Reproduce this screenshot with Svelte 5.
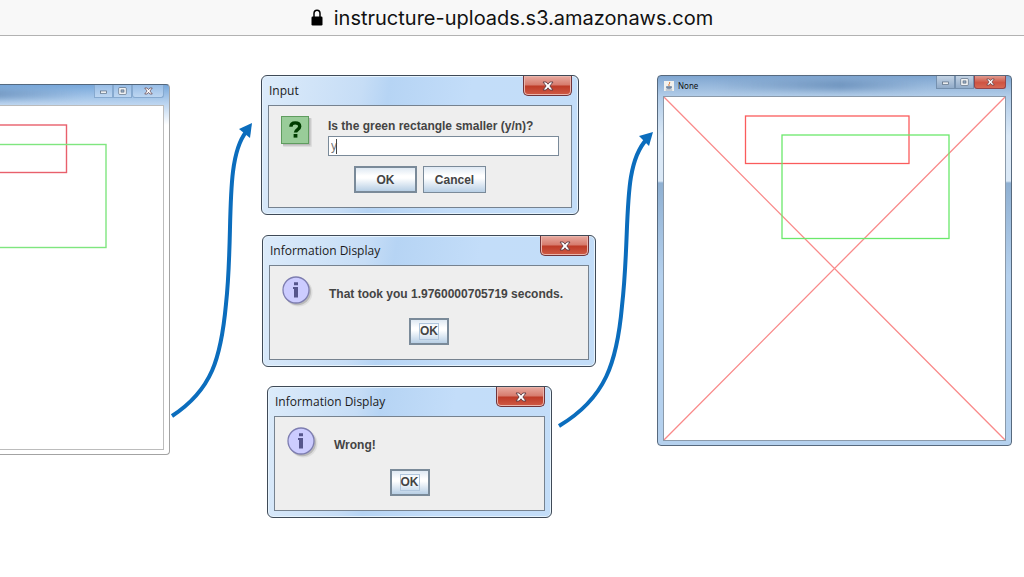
<script>
	const host = 'instructure-uploads.s3.amazonaws.com';

	let answer = $state('y');

	const infoDialogs = [
		{ id: 'timing', message: 'That took you 1.9760000705719 seconds.' },
		{ id: 'result', message: 'Wrong!' }
	];
</script>

{#snippet cross()}
	<svg class="cross" viewBox="0 0 12 10" aria-hidden="true">
		<path
			d="M1 1h3.2L6 3.2 7.8 1H11L7.9 5 11 9H7.8L6 6.8 4.2 9H1l3.1-4z"
			fill="#fff"
			stroke="#5b3a42"
			stroke-width="0.9"
			stroke-linejoin="round"
		/>
	</svg>
{/snippet}

{#snippet titleBar(title)}
	<header class="title-bar">
		<h2>{title}</h2>
		<button class="close" aria-label="Close">{@render cross()}</button>
	</header>
{/snippet}

{#snippet frameControls()}
	<div class="controls">
		<button aria-label="Minimize">
			<svg viewBox="0 0 12 10"><rect x="2" y="5" width="8" height="3" fill="#fff" stroke="#59697d" /></svg>
		</button>
		<button aria-label="Maximize">
			<svg viewBox="0 0 12 10">
				<rect x="1" y="0.5" width="10" height="9" rx="1" fill="#fff" stroke="#59697d" />
				<rect x="4" y="3.5" width="4" height="3" fill="#9db3cc" stroke="#59697d" />
			</svg>
		</button>
		<button class="frame-close" aria-label="Close">{@render cross()}</button>
	</div>
{/snippet}

<div class="page">
	<div class="address-bar">
		<svg class="lock" viewBox="0 0 12 17" aria-hidden="true">
			<path d="M3 8V4.6C3 2.6 4.2 1.2 6 1.2s3 1.4 3 3.4V8" fill="none" stroke="#000" stroke-width="1.5" />
			<rect x="0.5" y="7.5" width="11" height="9" rx="1.2" />
		</svg>
		<span>{host}</span>
	</div>

	<main class="desktop">
		<section class="frame frame-left">
			<header class="frame-bar">
				<span class="smudge"></span>
				{@render frameControls()}
			</header>
			<svg class="drawing" viewBox="0 0 343 345">
				<rect x="81.5" y="20" width="164" height="47.5" fill="none" stroke="#e8606c" stroke-width="1.4" />
				<rect x="118" y="39.5" width="167" height="103" fill="none" stroke="#7fe67f" stroke-width="1.4" />
			</svg>
		</section>

		<section class="dialog dialog-input">
			{@render titleBar('Input')}
			<div class="panel">
				<div class="row">
					<svg class="icon" viewBox="0 0 32 32" aria-hidden="true">
						<rect x="2" y="2" width="29" height="29" rx="1" fill="#000" opacity="0.07" />
						<rect x="2" y="2" width="27.5" height="27.5" fill="#000" opacity="0.16" />
						<rect x="0.5" y="0.5" width="27" height="27" fill="#99cc99" stroke="#5f9c5f" />
						<path
							d="M9.9 10.8C9.9 7.8 11.6 6.9 14.2 6.9s4.5 1.2 4.5 3.6c0 3.2-4.2 2.9-4.2 6.1"
							fill="none"
							stroke="#003c00"
							stroke-width="3.4"
						/>
						<rect x="12.6" y="18" width="3.8" height="3.6" fill="#003c00" />
					</svg>
					<div class="question">
						<label for="answer">Is the green rectangle smaller (y/n)?</label>
						<div class="field">
							<input id="answer" type="text" bind:value={answer} />
							<span class="caret"></span>
						</div>
					</div>
				</div>
				<div class="buttons">
					<button class="metal default wide">OK</button>
					<button class="metal wide">Cancel</button>
				</div>
			</div>
		</section>

		{#each infoDialogs as dialog (dialog.id)}
			<section class="dialog dialog-{dialog.id}">
				{@render titleBar('Information Display')}
				<div class="panel">
					<div class="row">
						<svg class="icon" viewBox="0 0 32 32" aria-hidden="true">
							<circle cx="16.5" cy="16.5" r="14" fill="#000" opacity="0.07" />
							<circle cx="15.5" cy="15.7" r="13.5" fill="#000" opacity="0.16" />
							<circle cx="14" cy="14" r="13" fill="#ccccff" stroke="#7d7db0" stroke-width="1.3" />
							<path d="M12 6.3h4v3h-4zM11 11h5v10.5h-4V13h-1z" fill="#55558c" />
						</svg>
						<p>{dialog.message}</p>
					</div>
					<div class="buttons">
						<button class="metal default"><span class="focus">OK</span></button>
					</div>
				</div>
			</section>
		{/each}

		<section class="frame frame-right">
			<header class="frame-bar">
				<svg class="java" viewBox="0 0 10 10" aria-hidden="true">
					<rect width="10" height="10" fill="#f1f1ee" />
					<path d="M5.5 1C7 2.5 3.5 3.2 5.2 5" fill="none" stroke="#dd7a35" />
					<path d="M2.5 5.5h5v1.6q-2.5 1.4-5 0zM1.8 9h6.4" fill="#7188a5" stroke="#7188a5" stroke-width="0.7" />
				</svg>
				<h2>None</h2>
				<span class="smudge"></span>
				{@render frameControls()}
			</header>
			<svg class="drawing" viewBox="0 0 343 345">
				<path d="M0 0l343 345M343 0L0 345" stroke="#f98a8a" stroke-width="1.3" />
				<rect x="82.5" y="20" width="163.5" height="47.5" fill="none" stroke="#fa5c5c" stroke-width="1.3" />
				<rect x="119" y="39" width="167" height="103.5" fill="none" stroke="#6be86b" stroke-width="1.3" />
			</svg>
		</section>

		<svg class="arrows" width="1024" height="541" aria-hidden="true">
			<g fill="none" stroke="#0b6dbd" stroke-width="4">
				<path d="M172 380C212 354 221 322 226 268C234 196 224 124 246 96" />
				<path d="M559 390C606 362 617 326 622 270C631 192 621 130 647 103" />
			</g>
			<path d="M252 87l-2 15-11-9z" fill="#0b6dbd" />
			<path d="M653 96l-4 14-10-10z" fill="#0b6dbd" />
		</svg>
	</main>
</div>

<style>
	:global(body) {
		margin: 0;
		background: #fff;
	}

	.page {
		min-height: 100vh;
		overflow: hidden;
		font-family: 'Liberation Sans', Arial, sans-serif;
	}

	.address-bar {
		display: flex;
		justify-content: center;
		align-items: center;
		gap: 11px;
		height: 35px;
		border-bottom: 1px solid #b2b2b2;
		background: #f8f8f8;
		color: #111;
		font-family: Inter, sans-serif;
		font-size: 20px;
	}

	.lock {
		width: 12px;
		height: 17px;
	}

	.desktop {
		position: relative;
		min-height: 541px;
	}

	button {
		padding: 0;
		font-family: inherit;
	}

	h2,
	p {
		margin: 0;
	}

	/* dialogs */
	.dialog {
		position: absolute;
		box-sizing: border-box;
		padding: 0 6px 6px;
		border: 1px solid #3f4a57;
		border-radius: 6px;
		background: linear-gradient(100deg, #dcebfa 0, #c6ddf6 30%, #b6d4f4 38%, #c3ddf9 62%, #c3ddf8 100%);
		box-shadow: inset 0 0 0 1px #e6f3fd;
	}

	.dialog-input {
		left: 261px;
		top: 39px;
		width: 318px;
	}

	.dialog-timing {
		left: 262px;
		top: 199px;
		width: 334px;
	}

	.dialog-result {
		left: 267px;
		top: 350px;
		width: 285px;
	}

	.title-bar {
		display: flex;
		justify-content: space-between;
		align-items: flex-start;
		height: 29px;
	}

	.title-bar h2 {
		padding-left: 1px;
		color: #1b1b1b;
		font: 400 12px/30px 'Open Sans', sans-serif;
	}

	.close {
		display: flex;
		justify-content: center;
		align-items: center;
		width: 49px;
		height: 20px;
		border: 1px solid #70343a;
		border-top: 0;
		border-radius: 0 0 5px 5px;
		background: linear-gradient(#e8aaa0 0, #d67a6c 48%, #bd3a27 52%, #cf5a45 100%);
		box-shadow: inset 0 0 0 1px #eab5ac;
	}

	.cross {
		width: 12px;
		height: 10px;
	}

	.panel {
		padding: 10px 12px 14px;
		border: 1px solid #76828f;
		background: #eee;
	}

	.row {
		display: flex;
		gap: 15px;
	}

	.icon {
		flex: none;
		width: 32px;
		height: 32px;
	}

	.question {
		flex: 1;
	}

	label,
	p {
		display: block;
		color: #444;
		font-size: 12px;
		font-weight: 700;
		line-height: 20px;
	}

	p {
		padding: 8px 0 14px;
	}

	.field {
		position: relative;
		width: 231px;
	}

	input {
		display: block;
		box-sizing: border-box;
		width: 100%;
		height: 20px;
		padding: 0 2px;
		border: 1px solid #7a8a99;
		border-radius: 0;
		background: #fff;
		color: #777;
		font: 12px 'Liberation Sans', Arial, sans-serif;
		outline: none;
	}

	.caret {
		position: absolute;
		top: 3px;
		left: 8px;
		width: 1px;
		height: 15px;
		background: #444;
	}

	.buttons {
		display: flex;
		justify-content: center;
		gap: 6px;
	}

	.dialog-input .buttons {
		padding-top: 10px;
	}

	.metal {
		height: 27px;
		padding: 0 8px;
		border: 1px solid #7a8a99;
		background: linear-gradient(#dfe9f3 0, #fff 34%, #fff 44%, #b8cfe5 100%);
		color: #444;
		font-size: 12px;
		font-weight: 700;
	}

	.metal.default {
		border-width: 2px;
	}

	.metal.wide {
		width: 63px;
	}

	.focus {
		display: inline-block;
		border: 1px solid #b0c6dd;
		line-height: 15px;
	}

	/* application frames */
	.frame {
		position: absolute;
		box-sizing: border-box;
		width: 355px;
		padding: 0 5px 4px;
		border: 1px solid #57697d;
		border-radius: 4px;
	}

	.frame-left {
		left: -185px;
		top: 48px;
		border-color: #53677c #a3a3a3 #a3a3a3;
		background: linear-gradient(#78a8db 0, #b9d3ef 18px, #fff 40px);
	}

	.frame-right {
		left: 657px;
		top: 39px;
		background: linear-gradient(#7fa6d1 0, #b1cce8 20px, #dbe9f7 60px, #dbe9f7 105px, #8fb0d2 107px, #b5d1ee 200px);
	}

	.frame-bar {
		display: flex;
		align-items: flex-start;
		height: 20px;
	}

	.frame-bar h2 {
		color: #111;
		font: 400 8px/20px 'Noto Sans', sans-serif;
	}

	.java {
		width: 10px;
		height: 10px;
		margin: 5px 4px 0 1px;
	}

	.smudge {
		flex: 1;
		height: 10px;
		margin: 4px 12px 0 18px;
		background: linear-gradient(90deg, #5f86b300, #6f94be 60%, #5f86b300);
		filter: blur(3px);
	}

	.controls {
		display: flex;
	}

	.controls button {
		display: flex;
		justify-content: center;
		align-items: center;
		box-sizing: border-box;
		width: 19px;
		height: 13px;
		border: 1px solid #7590ae;
		border-top: 0;
		background: linear-gradient(#c3d3e4, #91abc9);
	}

	.controls svg {
		width: 9px;
		height: 8px;
	}

	.controls .frame-close {
		width: 32px;
		border-radius: 0 0 3px 3px;
	}

	.frame-right .frame-close {
		border-color: #94454a;
		background: linear-gradient(#e09a8f 0, #cf5442 55%, #d66855 100%);
	}

	.frame-left .controls button {
		border-color: #86a9cf;
		background: linear-gradient(#98bde6, #bdd6f1);
	}

	.drawing {
		display: block;
		width: 100%;
		background: #fff;
		outline: 1px solid #8b9aaa;
		outline-offset: -1px;
	}

	.frame-left .drawing {
		outline-color: #bcbcbc;
	}

	.arrows {
		position: absolute;
		top: 0;
		left: 0;
		pointer-events: none;
	}
</style>
